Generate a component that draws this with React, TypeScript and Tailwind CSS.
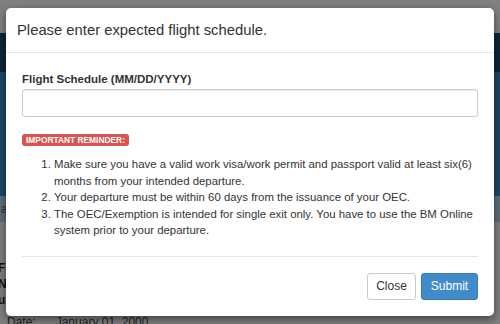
import React from 'react'

const reminders = [
  'Make sure you have a valid work visa/work permit and passport valid at least six(6) months from your intended departure.',
  'Your departure must be within 60 days from the issuance of your OEC.',
  'The OEC/Exemption is intended for single exit only. You have to use the BM Online system prior to your departure.',
]

export default function App() {
  return (
    <div
      className="relative w-[500px] h-[324px] overflow-hidden bg-[#7f7f7f] text-[#333]"
      style={{ fontFamily: "'Liberation Sans', Arial, Helvetica, sans-serif" }}
    >
      {/* Dimmed page behind the dialog */}
      <div className="flex flex-col">
        <div className="h-[33px] bg-[#808080]" />
        <div className="h-[39px] bg-[#0f2638]" />
        <div className="h-[124px] bg-[#1b4866]" />
        <div className="h-[26px] bg-[#5d6e79] flex items-center pl-[1px] text-[12px] text-[#1d3546]">a</div>
        <div className="flex flex-col pt-[38px] text-[12px] leading-[16px] font-bold text-[#111]">
          <span className="-ml-[2px]">F</span>
          <span className="-ml-[2px]">N</span>
          <span className="-ml-[2px]">ur</span>
        </div>
        <div className="flex gap-[20px] pl-[7px] mt-[5px] text-[12px] text-[#222]">
          <span>Date:</span>
          <span>January 01, 2000</span>
        </div>
      </div>

      {/* Modal */}
      <div className="absolute left-[6px] top-[8px] w-[488px] h-[308px] bg-white rounded-[5px] shadow-[0_3px_9px_rgba(0,0,0,0.5)] flex flex-col">
        <div className="h-[45px] border-b border-[#e5e5e5] flex items-center px-[11px]">
          <h4 className="text-[14.8px] leading-[18px] text-[#333] pb-[1px]">Please enter expected flight schedule.</h4>
        </div>

        <div className="px-[16px] pt-[18px] flex flex-col">
          <label className="block text-[11.5px] leading-[17px] font-bold text-[#333] mb-[1px]">
            Flight Schedule (MM/DD/YYYY)
          </label>
          <input
            type="text"
            className="h-[28px] w-full border border-[#ccc] rounded-[3px] shadow-[inset_0_1px_1px_rgba(0,0,0,0.075)] px-[10px] text-[12px] outline-none"
          />

          <div className="mt-[17px] flex">
            <span className="h-[12px] px-[4px] rounded-[3px] bg-[#d9534f] text-white text-[8.4px] leading-[12px] font-bold">
              IMPORTANT REMINDER:
            </span>
          </div>

          <ol className="list-decimal pl-[32px] mt-[10px] text-[11.4px] leading-[16.5px] text-[#333]">
            {reminders.map((r) => (
              <li key={r}>{r}</li>
            ))}
          </ol>

          <div className="mt-[17px] border-t border-[#e5e5e5]" />

          <div className="flex justify-end gap-[5px] pt-[16px]">
            <button className="h-[27px] w-[49px] rounded-[3px] border border-[#ccc] bg-white text-[12px] text-[#333]">
              Close
            </button>
            <button className="h-[27px] w-[57px] rounded-[3px] border border-[#357ebd] bg-[#428bca] text-[12px] text-white">
              Submit
            </button>
          </div>
        </div>
      </div>
    </div>
  )
}
